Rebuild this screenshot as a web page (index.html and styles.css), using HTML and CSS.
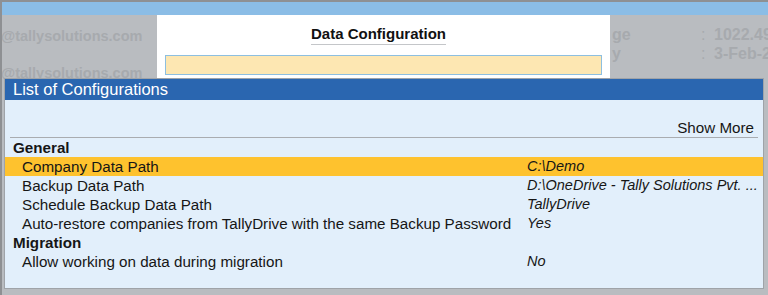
FILE: index.html
```html
<!DOCTYPE html>
<html>
<head>
<meta charset="utf-8">
<link rel="stylesheet" href="styles.css">
</head>
<body>
<div class="frame">
  <div class="topbar"></div>
  <div class="stage">
    <div class="bg-left">
      <div class="bg-line">@tallysolutions.com</div>
      <div class="bg-line bg-line-2">@tallysolutions.com</div>
    </div>
    <div class="dialog">
      <div class="dialog-title"><span class="title-text">Data Configuration</span></div>
      <div class="dialog-input"></div>
    </div>
    <div class="bg-right">
      <div class="bg-row"><span class="bg-label">ge</span><span class="bg-colon">:</span><span class="bg-value">1022.49</span></div>
      <div class="bg-row"><span class="bg-label">y</span><span class="bg-colon">:</span><span class="bg-value">3-Feb-2</span></div>
    </div>
  </div>
  <div class="panel">
    <div class="panel-header">List of Configurations</div>
    <div class="panel-body">
      <div class="show-more">Show More</div>
      <div class="group">General</div>
      <div class="row selected"><span class="label">Company Data Path</span><span class="value">C:\Demo</span></div>
      <div class="row"><span class="label">Backup Data Path</span><span class="value">D:\OneDrive - Tally Solutions Pvt. ...</span></div>
      <div class="row"><span class="label">Schedule Backup Data Path</span><span class="value">TallyDrive</span></div>
      <div class="row"><span class="label">Auto-restore companies from TallyDrive with the same Backup Password</span><span class="value">Yes</span></div>
      <div class="group">Migration</div>
      <div class="row"><span class="label">Allow working on data during migration</span><span class="value">No</span></div>
    </div>
  </div>
</div>
</body>
</html>
```

FILE: styles.css
```css
html, body {
  margin: 0;
  padding: 0;
}
body {
  width: 768px;
  height: 295px;
  overflow: hidden;
  background: #b9bcc0;
  font-family: "Liberation Sans", Arial, sans-serif;
  color: #161616;
}
.frame {
  box-sizing: border-box;
  width: 768px;
  height: 295px;
  border-left: 2px solid #8e9093;
  border-top: 2px solid #8e9093;
  display: flex;
  flex-direction: column;
}
.topbar {
  height: 13px;
  background: #8bbde6;
  flex: none;
}
.stage {
  height: 64px;
  flex: none;
  display: flex;
  overflow: hidden;
}
.bg-left {
  width: 155px;
  flex: none;
  overflow: hidden;
  color: #a7aaae;
  font-weight: bold;
  font-size: 14.5px;
}
.bg-line {
  margin-left: -1px;
  margin-top: 12px;
  line-height: 18px;
  white-space: nowrap;
}
.bg-line-2 {
  margin-top: 19px;
}
.dialog {
  width: 453px;
  flex: none;
  background: #ffffff;
  display: flex;
  flex-direction: column;
  align-items: center;
}
.dialog-title {
  margin-top: 10px;
  height: 20px;
  padding-right: 10px;
}
.title-text {
  display: inline-block;
  font-size: 15px;
  font-weight: bold;
  line-height: 18px;
  padding-bottom: 1px;
  border-bottom: 1px solid #c4c6c9;
  color: #111;
}
.dialog-input {
  margin-top: 10px;
  box-sizing: border-box;
  width: 437px;
  height: 20px;
  background: #fde7b2;
  border: 1px solid #8dbfe0;
}
.bg-right {
  flex: 1;
  overflow: hidden;
  color: #a7aaae;
  font-weight: bold;
  font-size: 16px;
  padding-top: 11px;
}
.bg-row {
  display: flex;
  height: 19px;
  line-height: 18px;
  white-space: nowrap;
}
.bg-label {
  width: 89px;
  padding-left: 2px;
  flex: none;
}
.bg-colon {
  width: 13px;
  flex: none;
  font-weight: normal;
}
.panel {
  margin: 0 5px 0 3px;
  height: 209px;
  flex: none;
  background: #e2effb;
  display: flex;
  flex-direction: column;
  box-shadow: 0 0 0 1px #9fa3a8;
}
.panel-header {
  height: 21px;
  line-height: 21px;
  background: #2a66b0;
  color: #ffffff;
  font-size: 16.5px;
  padding-left: 8px;
  flex: none;
}
.panel-body {
  padding-top: 18px;
  font-size: 15.2px;
}
.show-more {
  height: 19px;
  line-height: 19px;
  text-align: right;
  padding-right: 4px;
  margin: 0 5px;
  border-bottom: 1px solid #a9acb0;
}
.group {
  height: 19px;
  line-height: 19px;
  padding-left: 8px;
  font-weight: bold;
}
.row {
  height: 19px;
  line-height: 19px;
  display: flex;
  padding-left: 17px;
  white-space: nowrap;
}
.row.selected {
  background: #fec22e;
}
.label {
  width: 505px;
  flex: none;
}
.value {
  font-style: italic;
  font-size: 14.5px;
}
```
